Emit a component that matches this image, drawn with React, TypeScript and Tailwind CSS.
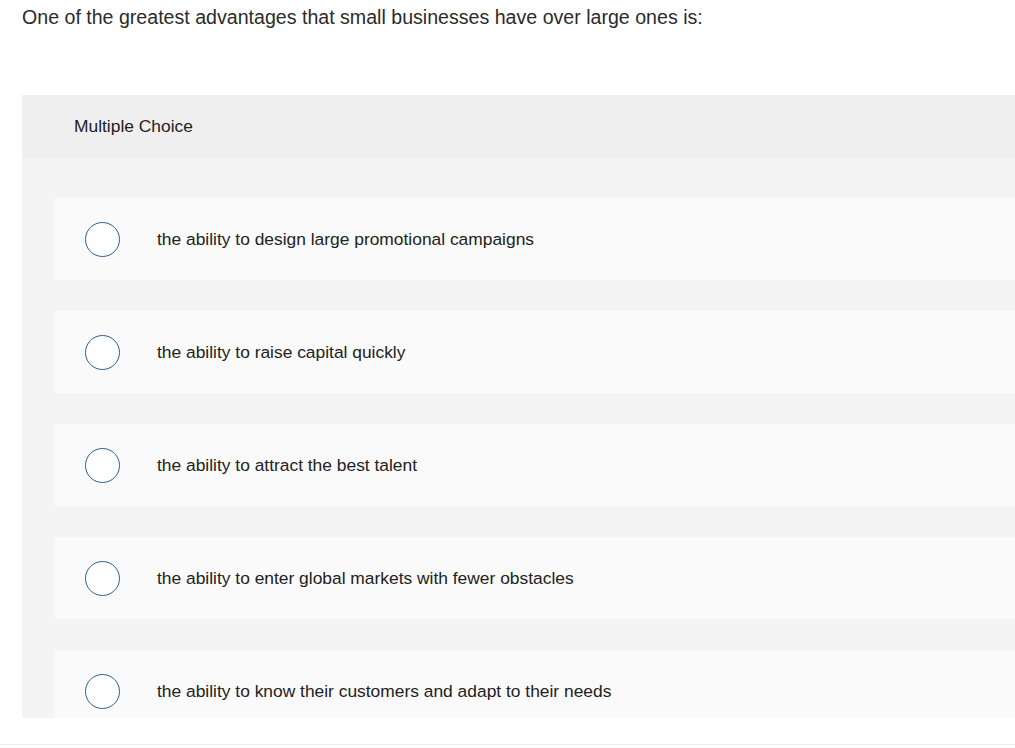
import React from "react";

const options = [
  "the ability to design large promotional campaigns",
  "the ability to raise capital quickly",
  "the ability to attract the best talent",
  "the ability to enter global markets with fewer obstacles",
  "the ability to know their customers and adapt to their needs",
];

export default function App() {
  return (
    <div
      className="w-[1015px] h-[748px] overflow-hidden bg-white text-[#333333]"
      style={{ fontFamily: '"Liberation Sans", Arial, sans-serif' }}
    >
      <div className="pl-[22px] pt-[5px] h-[95px]">
        <p className="text-[19.6px] leading-[24px] text-[#2b2b2b]">
          One of the greatest advantages that small businesses have over large ones is:
        </p>
      </div>
      <div className="ml-[22px] h-[623px] overflow-hidden bg-[#f4f4f4]">
        <div className="h-[63px] bg-[#efefef] flex items-center pl-[52px]">
          <span className="text-[17.4px] text-[#222]">Multiple Choice</span>
        </div>
        <div className="pl-[32px] pt-[40px] flex flex-col gap-[31px]">
          {options.map((o) => (
            <div
              key={o}
              className="h-[82px] shrink-0 bg-[#fafafa] rounded-l-[3px] flex items-center"
            >
              <div className="ml-[31px] w-[35px] h-[35px] rounded-full border-[1.5px] border-[#2d5f8f] bg-white shrink-0" />
              <span className="ml-[37px] text-[17.4px] text-[#222]">{o}</span>
            </div>
          ))}
        </div>
      </div>
      <div className="mt-[26px] h-px bg-[#ececec]" />
    </div>
  );
}
